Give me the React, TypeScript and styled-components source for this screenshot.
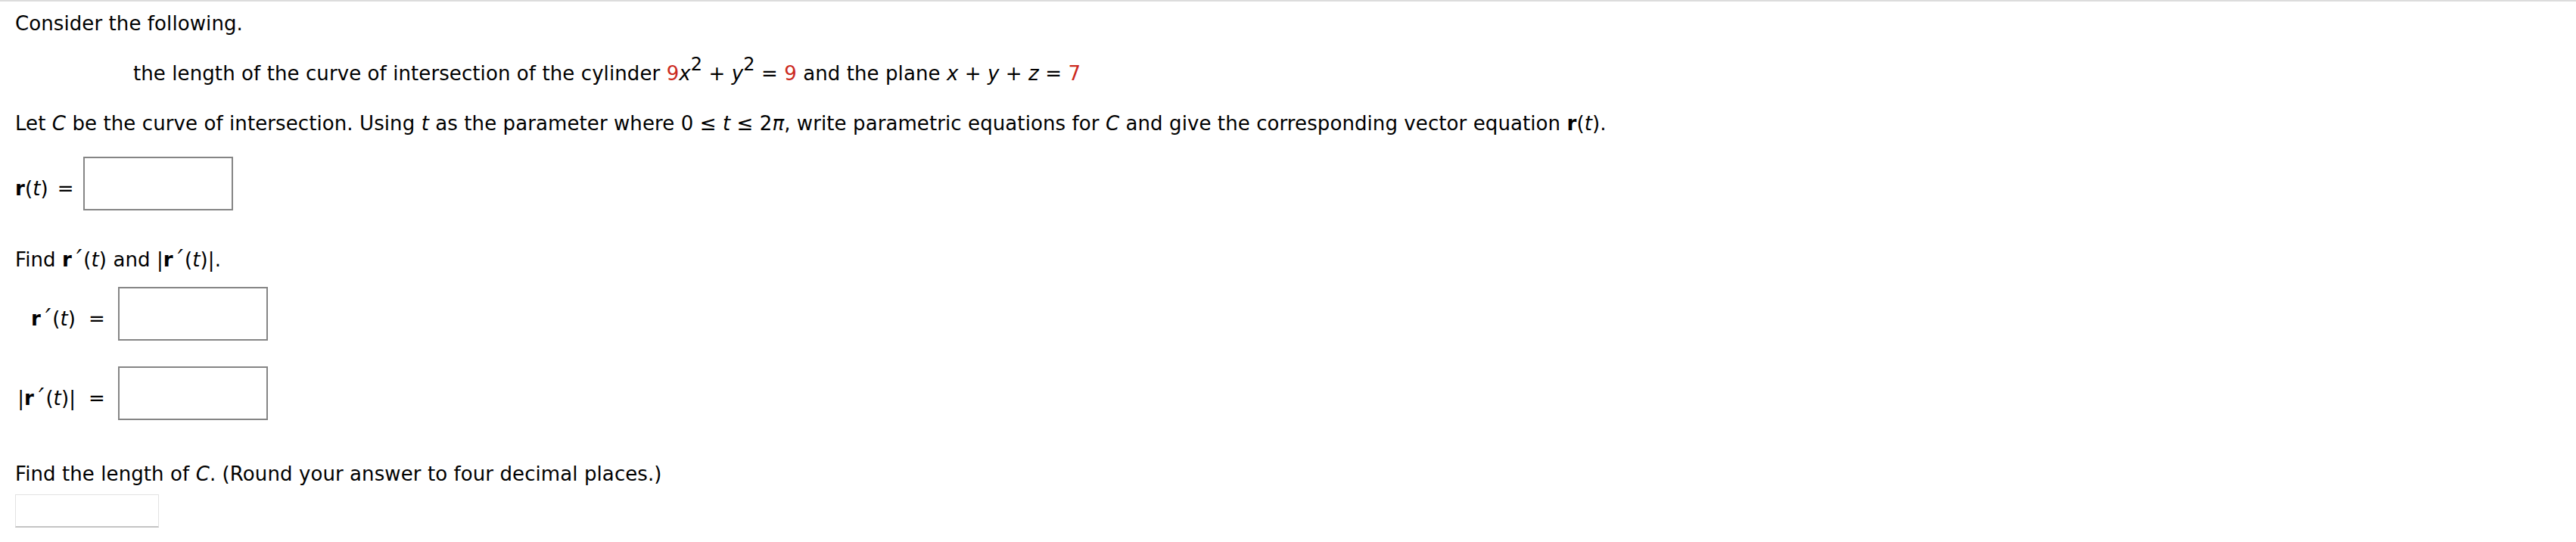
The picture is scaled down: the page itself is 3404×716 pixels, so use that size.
import styled, { createGlobalStyle } from 'styled-components'

const GlobalStyle = createGlobalStyle`
  html, body {
    margin: 0;
    padding: 0;
    background: #ffffff;
  }
  body {
    font-family: "DejaVu Sans", Verdana, sans-serif;
    font-size: 26px;
    line-height: 36px;
    letter-spacing: 0.09px;
    color: #000000;
  }
`

const Page = styled.div`
  border-top: 2px solid #dcdcdc;
  padding: 11px 20px 0 20px;
  display: flex;
  flex-direction: column;
  align-items: flex-start;
`

const Para = styled.p<{ $top?: number; $indent?: number }>`
  margin: ${p => p.$top ?? 0}px 0 0 ${p => p.$indent ?? 0}px;
  white-space: nowrap;
`

const Red = styled.span`
  color: #cc2a1e;
`

const Var = styled.i`
  font-style: italic;
`

const Vec = styled.b`
  font-weight: 700;
`

const Sup = styled.sup`
  font-size: 24px;
  line-height: 0;
  vertical-align: 13px;
`

// the prime sits a little apart from the bold r, as in the source
const PrimeMark = styled.i`
  font-style: italic;
  font-size: 32px;
  line-height: 0;
  margin: 0 2px 0 6px;
`

const AnswerRow = styled.div<{ $top: number }>`
  margin-top: ${p => p.$top}px;
  display: flex;
  align-items: flex-end;
  gap: 12px;
`

const AnswerGrid = styled.div<{ $top: number }>`
  margin-top: ${p => p.$top}px;
  display: grid;
  grid-template-columns: 80px auto auto;
  column-gap: 17px;
  row-gap: 34px;
  align-items: end;
`

const Label = styled.span<{ $align?: 'left' | 'right' }>`
  padding-bottom: 11px;
  white-space: nowrap;
  text-align: ${p => p.$align ?? 'left'};
`

const Equals = styled.span`
  padding-bottom: 11px;
`

const AnswerBox = styled.div`
  width: 194px;
  height: 67px;
  border: 2px solid #858585;
  background: #ffffff;
`

const NumberBox = styled.div`
  margin-top: 9px;
  width: 188px;
  height: 41px;
  border: 1px solid #e2e2e2;
  border-bottom: 2px solid #c4c4c4;
  background: #ffffff;
`

const Prime = () => <PrimeMark>′</PrimeMark>

export default function App() {
  return (
    <>
      <GlobalStyle />
      <Page>
        <Para>Consider the following.</Para>
        <Para $top={30} $indent={156}>
          the length of the curve of intersection of the cylinder <Red>9</Red>
          <Var>x</Var>
          <Sup>2</Sup> + <Var>y</Var>
          <Sup>2</Sup> = <Red>9</Red> and the plane <Var>x</Var> + <Var>y</Var> + <Var>z</Var> ={' '}
          <Red>7</Red>
        </Para>
        <Para $top={30}>
          Let <Var>C</Var> be the curve of intersection. Using <Var>t</Var> as the parameter where 0 ≤{' '}
          <Var>t</Var> ≤ 2<Var>π</Var>, write parametric equations for <Var>C</Var> and give the
          corresponding vector equation <Vec>r</Vec>(<Var>t</Var>).
        </Para>

        <AnswerRow $top={26}>
          <Label>
            <Vec>r</Vec>(<Var>t</Var>)
          </Label>
          <Equals>=</Equals>
          <AnswerBox />
        </AnswerRow>

        <Para $top={47}>
          Find <Vec>r</Vec>
          <Prime />(<Var>t</Var>) and |<Vec>r</Vec>
          <Prime />(<Var>t</Var>)|.
        </Para>

        <AnswerGrid $top={18}>
          <Label $align="right">
            <Vec>r</Vec>
            <Prime />(<Var>t</Var>)
          </Label>
          <Equals>=</Equals>
          <AnswerBox />
          <Label $align="right">
            |<Vec>r</Vec>
            <Prime />(<Var>t</Var>)|
          </Label>
          <Equals>=</Equals>
          <AnswerBox />
        </AnswerGrid>

        <Para $top={53}>
          Find the length of <Var>C</Var>. (Round your answer to four decimal places.)
        </Para>
        <NumberBox />
      </Page>
    </>
  )
}
